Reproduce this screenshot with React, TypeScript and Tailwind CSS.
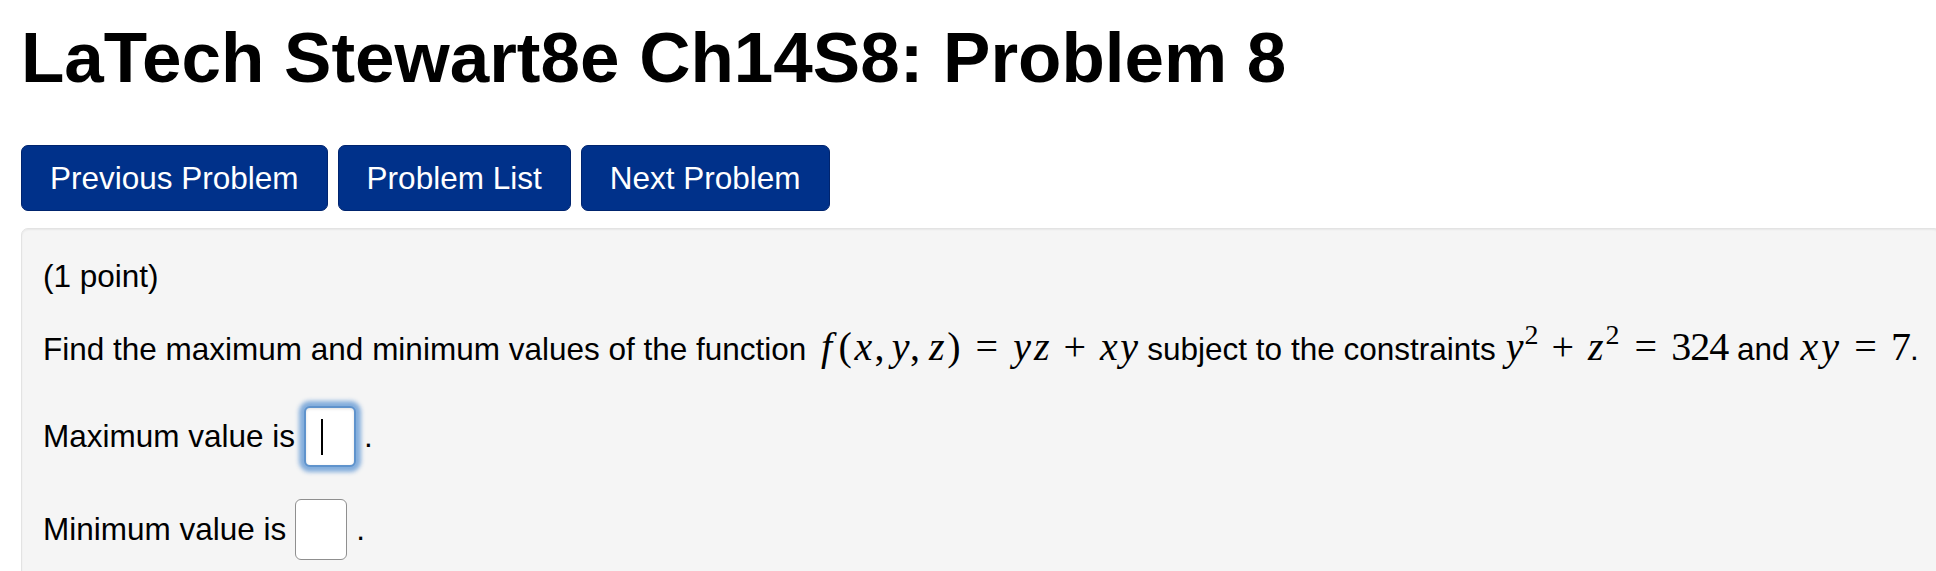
import type { ReactNode } from "react";

// math token: fixed advance width so the formula keeps TeX spacing
function T({ w, it, children }: { w: string; it?: boolean; children: ReactNode }) {
  return <span className={`inline-block text-center ${w} ${it ? "italic" : ""}`}>{children}</span>;
}

function Sup({ children }: { children: ReactNode }) {
  return (
    <span className="relative -top-[16px] inline-block w-[15px] text-left text-[28px]">{children}</span>
  );
}

function Math({ children }: { children: ReactNode }) {
  return (
    <span className="inline-block font-['Liberation_Serif','Times_New_Roman',serif] text-[40px] leading-none">
      {children}
    </span>
  );
}

function AnswerBox({ focused }: { focused?: boolean }) {
  return (
    <span
      className={`ml-[9px] flex h-[61px] w-[52px] items-center rounded-[6px] bg-white pl-[15px] ${
        focused
          ? "border-2 border-[#5f93cc] shadow-[0_0_4px_5px_rgba(110,160,215,0.85),inset_0_1px_3px_rgba(0,0,0,0.12)]"
          : "border border-[#8f8f8f]"
      }`}
    >
      {focused && <span className="h-[36px] w-[2px] bg-black" />}
    </span>
  );
}

const buttons = ["Previous Problem", "Problem List", "Next Problem"];

export default function App() {
  return (
    <div className="h-[571px] overflow-hidden bg-white pl-[21px] font-['Liberation_Sans',Arial,sans-serif] text-black">
      <h1 className="mt-[19px] whitespace-nowrap text-[71px] font-bold leading-[77px]">
        LaTech Stewart8e Ch14S8: Problem 8
      </h1>

      <div className="mt-[49px] flex gap-[10px]">
        {buttons.map((b) => (
          <button
            key={b}
            type="button"
            className="whitespace-nowrap rounded-[7px] border border-[#00246e] bg-[#00318a] px-[28px] py-[10px] text-[31.5px] leading-[44px] text-white"
          >
            {b}
          </button>
        ))}
      </div>

      <div className="mt-[17px] w-max rounded-[7px] border border-[#e3e3e3] bg-[#f5f5f5] pb-[40px] pl-[21px] pr-[21px] pt-[25px] text-[31.5px] leading-[45px] shadow-[inset_0_1px_2px_rgba(0,0,0,0.06)]">
        <div>(1 point)</div>

        <div className="mt-[28px] whitespace-nowrap">
          Find the maximum and minimum values of the function{" "}
          <Math>
            <T w="w-[22.7px]" it>f</T>
            <T w="w-[14.8px]">(</T>
            <T w="w-[21.8px]" it>x</T>
            <T w="w-[17px] text-left">,</T>
            <T w="w-[18.7px]" it>y</T>
            <T w="w-[17px] text-left">,</T>
            <T w="w-[19.4px]" it>z</T>
            <T w="w-[14.8px]">)</T>
            <T w="w-[50.8px]">=</T>
            <T w="w-[20px]" it>y</T>
            <T w="w-[19.4px]" it>z</T>
            <T w="w-[46.6px]">+</T>
            <T w="w-[21.8px]" it>x</T>
            <T w="w-[18.7px]" it>y</T>
          </Math>{" "}
          subject to the constraints{" "}
          <Math>
            <T w="w-[20px]" it>y</T>
            <Sup>2</Sup>
            <T w="w-[46.6px]">+</T>
            <T w="w-[19.4px]" it>z</T>
            <Sup>2</Sup>
            <T w="w-[50.8px]">=</T>
            <T w="w-[19px]">3</T>
            <T w="w-[19px]">2</T>
            <T w="w-[19px]">4</T>
          </Math>{" "}
          and{" "}
          <Math>
            <T w="w-[21.8px]" it>x</T>
            <T w="w-[20px]" it>y</T>
            <T w="w-[50.8px]">=</T>
            <T w="w-[19px]">7</T>
          </Math>
          .
        </div>

        <div className="mt-[34px] flex items-center whitespace-nowrap">
          <span>Maximum value is</span>
          <AnswerBox focused />
          <span className="ml-[8px]">.</span>
        </div>

        <div className="mt-[32px] flex items-center whitespace-nowrap">
          <span>Minimum value is</span>
          <AnswerBox />
          <span className="ml-[9px]">.</span>
        </div>
      </div>
    </div>
  );
}
